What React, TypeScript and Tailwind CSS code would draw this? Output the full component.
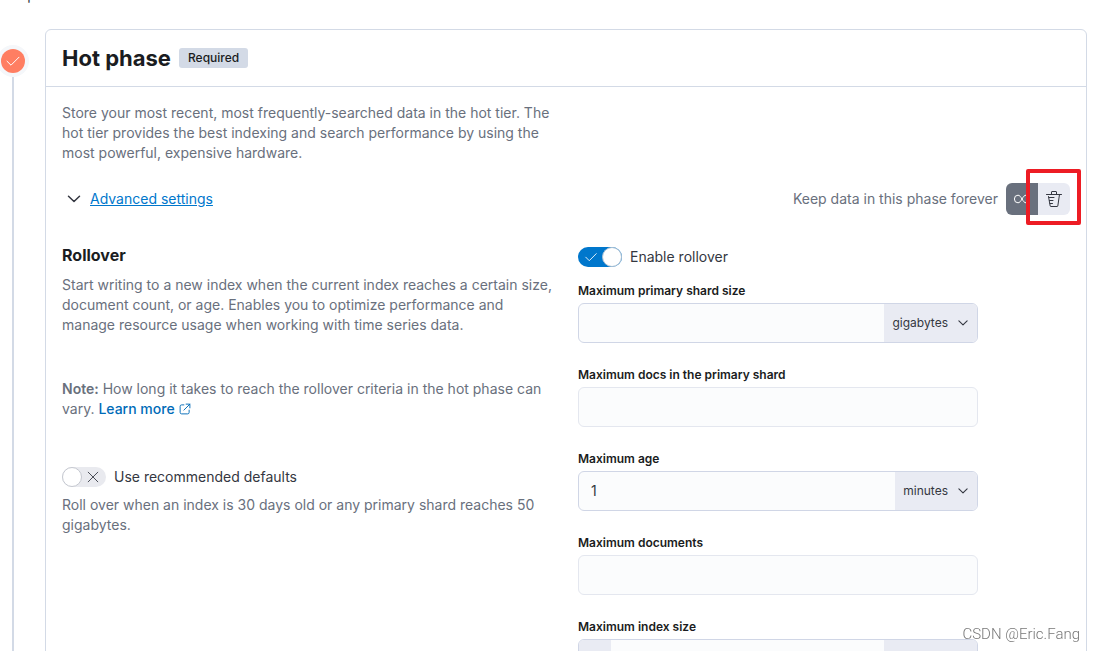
import { useState } from "react";
import type { ReactNode } from "react";

type IconProps = { d: string; className: string };

function Icon({ d, className }: IconProps) {
  return (
    <svg viewBox="0 0 16 16" fill="none" stroke="currentColor" strokeLinecap="round" strokeLinejoin="round" className={className} aria-hidden="true">
      <path d={d} />
    </svg>
  );
}

const CHECK = "M2 8.200 6 12.200l8-8";
const CHEVRON = "M2.500 5.200 8 10.500 13.500 5.200";
const CROSS = "M2.500 2.500l11 11M13.500 2.500l-11 11";
const INFINITY = "M8 8C6.800 5.800 5.600 4.200 4 4.200a3.600 3.800 0 0 0 0 7.600c1.600 0 2.800-1.600 4-3.800s2.400-3.800 4-3.800a3.600 3.800 0 0 1 0 7.600c-1.600 0-2.800-1.600-4-3.800";
const TRASH = "M.5 3.500h15M5.500 3.500v-2.500a.5.5 0 0 1 .5-.5h4a.5.5 0 0 1 .5.5v2.500M2.500 5.500l1.700 9.500a.6.6 0 0 0 .6.5h6.400a.6.6 0 0 0 .6-.5L13.500 3.500M3 6.500h5M3.500 9.500h3.500M4 12.500h2.500";
const POPOUT = "M6.500 2.500h-3a2 2 0 0 0-2 2v8a2 2 0 0 0 2 2h8a2 2 0 0 0 2-2v-3M9.500 1.500h5v5M14.500 1.500 6.500 9.500";

function Switch({ label, defaultOn }: { label: string; defaultOn: boolean }) {
  const [on, setOn] = useState(defaultOn);
  return (
    <label className="flex h-5 cursor-pointer items-center gap-2 text-[#343741]">
      <input type="checkbox" role="switch" checked={on} onChange={() => setOn(!on)} className="peer sr-only" />
      {on ? (
        <span className="flex h-5 w-11 items-center justify-between rounded-full bg-[#0077cc] pl-1.5 text-white">
          <Icon d={CHECK} className="size-3.5" />
          <span className="size-5 rounded-full border border-[#a9bfd3] bg-white" />
        </span>
      ) : (
        <span className="flex h-5 w-11 items-center justify-between rounded-full bg-[#e9eaef] pr-1.5 text-[#343741]">
          <span className="size-5 rounded-full border border-[#c5c8d0] bg-white" />
          <Icon d={CROSS} className="size-3.5" />
        </span>
      )}
      {label}
    </label>
  );
}

type FieldProps = { id: string; label: string; value?: string; unit?: string; units?: string[]; prefix?: ReactNode; outlined?: boolean };

function Field({ id, label, value = "", unit, units = [], prefix, outlined = false }: FieldProps) {
  return (
    <div>
      <label htmlFor={id} className="mb-1 block text-xs leading-4 font-semibold text-[#1a1c21]">
        {label}
      </label>
      <div className={`flex h-10 overflow-hidden rounded-md border bg-[#fbfcfd] ${outlined ? "border-[#d0d6e6]" : "border-[#e4e7ef]"}`}>
        {prefix}
        <input id={id} type="text" defaultValue={value} className="min-w-0 grow bg-transparent px-3 text-sm text-[#343741] outline-none" />
        {unit && (
          <span className="relative flex bg-[#e9ebf3]">
            <select aria-label={`${label} units`} defaultValue={unit} className="field-sizing-content cursor-pointer appearance-none bg-transparent pr-[29px] pl-2 text-xs text-[#343741] outline-none">
              {[unit, ...units].map((u) => (
                <option key={u}>{u}</option>
              ))}
            </select>
            <Icon d={CHEVRON} className="pointer-events-none absolute inset-y-0 right-2 my-auto size-3 stroke-[1.5] text-[#343741]" />
          </span>
        )}
      </div>
    </div>
  );
}

const SIZES = ["bytes", "kilobytes", "megabytes"];

export default function App() {
  return (
    <div className="h-screen overflow-hidden bg-white font-['Inter',sans-serif] text-sm leading-5 text-[#69707d]">
      <div className="-mt-[15px] h-5 text-[#343741]">Hot phase</div>
      <div className="mt-6 flex gap-4 pr-2">
        <div className="flex w-[29px] shrink-0 flex-col items-center pr-[3px] pt-4">
          <div className="flex size-8 shrink-0 items-center justify-center rounded-full bg-[#f5f7fa]">
            <span className="flex size-6 items-center justify-center rounded-full bg-[#ff7e62] text-white">
              <Icon d={CHECK} className="size-4" />
            </span>
          </div>
          <div className="w-0.5 grow bg-[#d3dae6]" />
        </div>

        <section className="min-w-0 grow rounded-md border border-[#d3dae6]">
          <header className="flex h-[57px] items-center gap-2 border-b border-[#d3dae6] px-4">
            <h2 className="text-[22px] leading-8 font-bold text-[#1a1c21]">Hot phase</h2>
            <span className="rounded-[3px] bg-[#d3dae6] px-[9px] text-xs leading-5 font-medium text-[#1a1c21]">Required</span>
          </header>

          <div className="p-4">
            <div className="grid grid-cols-2 gap-6">
              <p>
                Store your most recent, most frequently-searched data in the hot tier. The hot tier provides the best indexing and search performance by using the most powerful, expensive hardware.
              </p>
            </div>

            <div className="mt-5 flex items-center justify-between">
              <button type="button" className="flex items-center gap-2 pl-1 text-[#0077cc]">
                <Icon d={CHEVRON} className="size-4 stroke-[1.5] text-[#343741]" />
                <span className="underline">Advanced settings</span>
              </button>
              <div className="flex items-center gap-2">
                <span>Keep data in this phase forever</span>
                <div className="relative flex">
                  <button type="button" aria-label="Keep data in this phase forever" className="flex size-8 items-center justify-center rounded-l-md bg-[#69707d] text-white">
                    <Icon d={INFINITY} className="size-4" />
                  </button>
                  <button type="button" aria-label="Delete data after this phase" className="flex size-8 items-center justify-center rounded-r-md bg-[#e9ebf3] text-[#343741]">
                    <Icon d={TRASH} className="size-4" />
                  </button>
                  <span className="pointer-events-none absolute -top-3.5 -right-[11px] h-14 w-[55px] rounded-xs border-4 border-[#ed1c24]" />
                </div>
              </div>
            </div>

            <div className="mt-7 grid grid-cols-2 gap-6">
              <div>
                <h3 className="text-base leading-6 font-bold text-[#1a1c21]">Rollover</h3>
                <p className="mt-2">
                  Start writing to a new index when the current index reaches a certain size, document count, or age. Enables you to optimize performance and manage resource usage when working with time series data.
                </p>
                <p className="mt-11">
                  <strong className="font-semibold">Note:</strong> How long it takes to reach the rollover criteria in the hot phase can vary.{" "}
                  <a href="#learn-more" className="font-medium text-[#006bb8]">
                    Learn more
                    <Icon d={POPOUT} className="ml-1 inline size-3 stroke-[1.25] align-[-1px]" />
                  </a>
                </p>
                <div className="mt-12">
                  <Switch label="Use recommended defaults" defaultOn={false} />
                </div>
                <p className="mt-2">Roll over when an index is 30 days old or any primary shard reaches 50 gigabytes.</p>
              </div>

              <div className="pt-1">
                <Switch label="Enable rollover" defaultOn={true} />
                <div className="mt-4 flex max-w-[400px] flex-col gap-6">
                  <Field id="shard-size" label="Maximum primary shard size" unit="gigabytes" units={SIZES} outlined />
                  <Field id="shard-docs" label="Maximum docs in the primary shard" />
                  <Field id="age" label="Maximum age" value="1" unit="minutes" units={["days", "hours", "seconds"]} outlined />
                  <Field id="documents" label="Maximum documents" />
                  <Field id="index-size" label="Maximum index size" unit="gigabytes" units={SIZES} outlined prefix={<span className="w-8 shrink-0 bg-[#e9ebf3]" />} />
                </div>
              </div>
            </div>
          </div>
        </section>
      </div>
      <span className="pointer-events-none fixed right-[15px] bottom-[7px] font-['Roboto',sans-serif] text-[15px] font-light text-[#777777]">CSDN @Eric.Fang</span>
    </div>
  );
}
